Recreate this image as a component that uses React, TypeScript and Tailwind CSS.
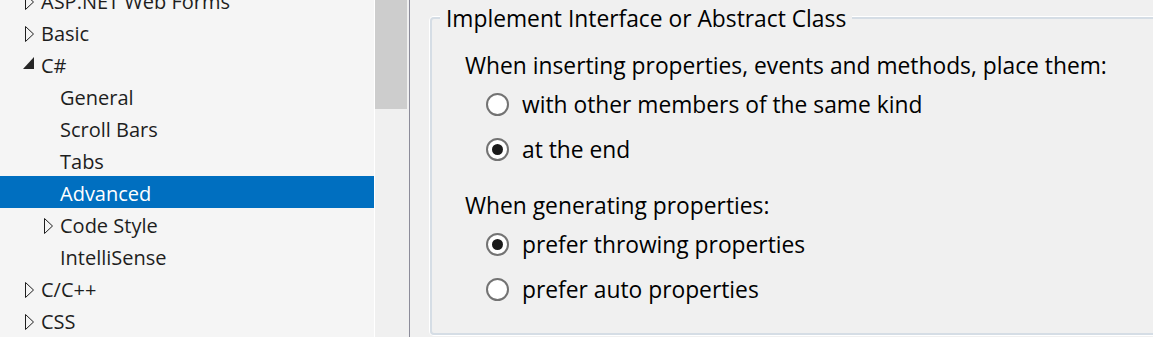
import * as React from 'react';

type TreeItem = {
  label: string;
  level: number;
  state?: 'collapsed' | 'expanded';
  selected?: boolean;
};

const tree: TreeItem[] = [
  { label: 'ASP.NET Web Forms', level: 1, state: 'collapsed' },
  { label: 'Basic', level: 1, state: 'collapsed' },
  { label: 'C#', level: 1, state: 'expanded' },
  { label: 'General', level: 2 },
  { label: 'Scroll Bars', level: 2 },
  { label: 'Tabs', level: 2 },
  { label: 'Advanced', level: 2, selected: true },
  { label: 'Code Style', level: 2, state: 'collapsed' },
  { label: 'IntelliSense', level: 2 },
  { label: 'C/C++', level: 1, state: 'collapsed' },
  { label: 'CSS', level: 1, state: 'collapsed' },
];

// Outlined / filled expander glyphs of the options tree
function Expander({ state }: { state?: 'collapsed' | 'expanded' }) {
  if (state === 'collapsed') {
    return (
      <svg width="10" height="16" viewBox="0 0 10 16" className="mt-[3px]">
        <polygon points="0.5,0.5 8.5,8 0.5,15.5" fill="none" stroke="#1e1e1e" strokeWidth="1" />
      </svg>
    );
  }
  if (state === 'expanded') {
    return (
      <svg width="11" height="12" viewBox="0 0 11 12" className="ml-[-2px] mt-[-2px]">
        <polygon points="11,0 11,12 0,12" fill="#262626" />
      </svg>
    );
  }
  return null;
}

function TreeRow({ item }: { item: TreeItem }) {
  return (
    <div
      className={
        'flex h-[32px] shrink-0 items-center whitespace-nowrap ' +
        (item.selected ? 'bg-[#006fc0] text-white' : 'text-[#1e1e1e]')
      }
      style={{ paddingLeft: 25 + (item.level - 1) * 19 }}
    >
      <div className="flex w-[16px] shrink-0 items-center">
        <Expander state={item.state} />
      </div>
      <span className="pt-[4px] leading-[28px]">{item.label}</span>
    </div>
  );
}

function Radio({ checked, label }: { checked?: boolean; label: string }) {
  return (
    <div className="flex h-[28px] items-center pl-[21px]">
      <div className="mb-[1px] flex h-[23px] w-[23px] shrink-0 items-center justify-center rounded-full border-2 border-[#737373] bg-white">
        {checked && <div className="h-[11px] w-[11px] rounded-full bg-[#1a1a1a]" />}
      </div>
      <span className="ml-[13px] whitespace-nowrap leading-[28px]">{label}</span>
    </div>
  );
}

export default function App() {
  return (
    <div
      className="flex h-[337px] w-[1153px] overflow-hidden text-[20px]"
      style={{ fontFamily: '"Open Sans", "Noto Sans", sans-serif' }}
    >
      {/* options tree */}
      <div className="flex w-[375px] shrink-0 flex-col overflow-hidden border-r border-white bg-[#f5f5f5]">
        <div className="mt-[-16px] flex flex-col">
          {tree.map((item) => (
            <TreeRow key={item.label} item={item} />
          ))}
        </div>
      </div>

      {/* scroll bar */}
      <div className="w-[34px] shrink-0 bg-[#f0f0f0]">
        <div className="h-[109px] w-[32px] bg-[#cdcdcd]" />
      </div>
      <div className="w-px shrink-0 bg-[#8c8c9a]" />

      {/* page */}
      <div className="flex-1 bg-[#f0f0f0] pl-[20px] pt-[17px] text-[22.8px]">
        <div className="relative mr-[-20px] h-[318px] rounded-[4px] border-2 border-[#d5dde5] shadow-[0_0_0_1px_#ffffff] text-black">
          <div className="absolute -top-[14px] left-[8px] bg-[#f0f0f0] px-[6px] leading-[28px] whitespace-nowrap">
            Implement Interface or Abstract Class
          </div>
          <div className="flex flex-col pl-[33px] pt-[33px]">
            <div className="h-[28px] whitespace-nowrap leading-[28px]">When inserting properties, events and methods, place them:</div>
            <div className="mt-[11px]">
              <Radio label="with other members of the same kind" />
            </div>
            <div className="mt-[17px]">
              <Radio checked label="at the end" />
            </div>
            <div className="mt-[28px] h-[28px] leading-[28px]">When generating properties:</div>
            <div className="mt-[11px]">
              <Radio checked label="prefer throwing properties" />
            </div>
            <div className="mt-[17px]">
              <Radio label="prefer auto properties" />
            </div>
          </div>
        </div>
      </div>
    </div>
  );
}
